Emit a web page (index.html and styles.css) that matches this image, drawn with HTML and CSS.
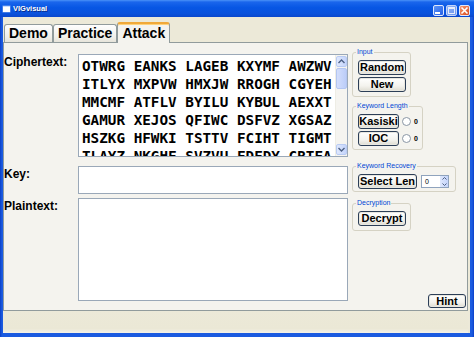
FILE: index.html
```html
<!DOCTYPE html>
<html lang="en">
<head>
  <meta charset="UTF-8">
  <title>VIGvisual</title>
  <link rel="stylesheet" href="styles.css">
</head>
<body>

<div class="window">
  <div class="titlebar">
    <span class="app-icon"></span>
    <span class="title">VIGvisual</span>
    <div class="controls">
      <span class="ctl ctl-min">
        <svg width="9" height="9" viewBox="0 0 9 9"><rect x="1" y="6" width="5" height="2" fill="#fff"/></svg>
      </span>
      <span class="ctl ctl-max">
        <svg width="9" height="9" viewBox="0 0 9 9"><rect x="1.5" y="1.5" width="6" height="6" fill="none" stroke="#e6ecfb" stroke-width="1"/><rect x="1" y="1" width="7" height="2" fill="#e6ecfb"/></svg>
      </span>
      <span class="ctl ctl-close">
        <svg width="9" height="9" viewBox="0 0 9 9"><path d="M1.5 1.5 L7.5 7.5 M7.5 1.5 L1.5 7.5" stroke="#fff" stroke-width="1.6"/></svg>
      </span>
    </div>
  </div>

  <div class="client">
    <div class="tabs">
      <div class="tab">Demo</div>
      <div class="tab">Practice</div>
      <div class="tab active">Attack</div>
    </div>

    <div class="panel">
      <div class="fields">
        <div class="row">
          <label class="field-label">Ciphertext:</label>
          <div class="textbox cipher">
            <div class="cipher-text">OTWRG EANKS LAGEB KXYMF AWZWV
ITLYX MXPVW HMXJW RROGH CGYEH
MMCMF ATFLV BYILU KYBUL AEXXT
GAMUR XEJOS QFIWC DSFVZ XGSAZ
HSZKG HFWKI TSTTV FCIHT TIGMT
TLAYZ NKGHF SVZVU FDEDY CRTEA
QHRAO LMKEB ZXNPU WTCJS VDIYG</div>
            <div class="vscroll">
              <div class="sb-btn">
                <svg width="7" height="5" viewBox="0 0 7 5"><path d="M0.5 4 L3.5 1 L6.5 4" fill="none" stroke="#4d6185" stroke-width="1.4"/></svg>
              </div>
              <div class="sb-thumb"></div>
              <div class="sb-track"></div>
              <div class="sb-btn">
                <svg width="7" height="5" viewBox="0 0 7 5"><path d="M0.5 1 L3.5 4 L6.5 1" fill="none" stroke="#4d6185" stroke-width="1.4"/></svg>
              </div>
            </div>
          </div>
        </div>

        <div class="row row-key">
          <label class="field-label">Key:</label>
          <div class="textbox key"></div>
        </div>

        <div class="row row-plain">
          <label class="field-label">Plaintext:</label>
          <div class="textbox plain"></div>
        </div>
      </div>

      <div class="side">
        <fieldset class="group">
          <legend>Input</legend>
          <div class="group-body">
            <button class="btn btn-wide">Random</button>
            <button class="btn btn-wide">New</button>
          </div>
        </fieldset>

        <fieldset class="group group-len">
          <legend>Keyword Length</legend>
          <div class="group-body">
            <div class="opt-row">
              <button class="btn btn-short">Kasiski</button>
              <span class="radio"></span>
              <span class="tiny">0</span>
            </div>
            <div class="opt-row">
              <button class="btn btn-short">IOC</button>
              <span class="radio"></span>
              <span class="tiny">0</span>
            </div>
          </div>
        </fieldset>

        <fieldset class="group group-rec">
          <legend>Keyword Recovery</legend>
          <div class="group-body">
            <div class="opt-row">
              <button class="btn btn-select">Select Len</button>
              <div class="spinner">
                <span class="spin-value">0</span>
                <div class="spin-btns">
                  <span class="spin-btn"><svg width="5" height="3" viewBox="0 0 5 3"><path d="M0.5 2.5 L2.5 0.5 L4.5 2.5" fill="none" stroke="#4d6185" stroke-width="1"/></svg></span>
                  <span class="spin-btn"><svg width="5" height="3" viewBox="0 0 5 3"><path d="M0.5 0.5 L2.5 2.5 L4.5 0.5" fill="none" stroke="#4d6185" stroke-width="1"/></svg></span>
                </div>
              </div>
            </div>
          </div>
        </fieldset>

        <fieldset class="group group-dec">
          <legend>Decryption</legend>
          <div class="group-body">
            <button class="btn btn-wide">Decrypt</button>
          </div>
        </fieldset>

        <button class="btn hint">Hint</button>
      </div>
    </div>

    <div class="statusbar"></div>
  </div>
</div>

</body>
</html>
```

FILE: styles.css
```css
body {
  margin: 0;
  font-family: "Liberation Sans", Arial, sans-serif;
  background: #ece9d8;
}

.window {
  width: 474px;
  height: 337px;
  display: flex;
  flex-direction: column;
  background: linear-gradient(90deg, #0a3fc8, #1b5be0 2px, #1b5be0 calc(100% - 2px), #0a3fc8);
}

/* title bar */
.titlebar {
  height: 17px;
  display: flex;
  align-items: center;
  padding: 0 4px 0 3px;
  background: linear-gradient(#4a92f8 0, #1a66ec 2px, #0756e4 45%, #0a52dc 80%, #0a47cc 100%);
  color: #fff;
}

.app-icon {
  width: 7px;
  height: 5px;
  background: #fff;
  border-top: 1px solid #c9dcff;
  box-shadow: 0 0 0 0.5px #7aa6f0;
}

.title {
  margin-left: 3px;
  font-size: 7.5px;
  font-weight: bold;
  text-shadow: 1px 1px 0 #0a2c8a;
}

.controls {
  margin-left: auto;
  display: flex;
  gap: 2px;
  align-self: flex-end;
  margin-bottom: 1px;
}

.ctl {
  width: 11px;
  height: 11px;
  box-sizing: border-box;
  border: 1px solid #dfe8fc;
  border-radius: 2px;
  display: flex;
  align-items: center;
  justify-content: center;
  background: linear-gradient(135deg, #5c94f8, #2560e6);
}

.ctl-max {
  background: linear-gradient(135deg, #8fb2f6, #6d96ee);
  border-color: #c2d4fa;
}

.ctl-close {
  background: linear-gradient(135deg, #f29a74, #d9491c);
}

/* client area */
.client {
  flex: 1;
  margin: 0 4px 4px 3px;
  padding-right: 2px;
  background: #ece9d8;
  display: flex;
  flex-direction: column;
}

.tabs {
  height: 26px;
  margin-bottom: -1px;
  padding-left: 1px;
  display: flex;
  align-items: flex-end;
  position: relative;
  z-index: 1;
}

.tab {
  height: 18px;
  margin-bottom: 1px;
  padding: 0 4px;
  box-sizing: border-box;
  border: 1px solid #919b9c;
  border-bottom: none;
  border-radius: 3px 3px 0 0;
  background: linear-gradient(#fefefe, #f0efea 70%, #e6e4da);
  font-size: 14px;
  font-weight: bold;
  line-height: 17px;
}

.tab.active {
  height: 21px;
  margin-bottom: 0;
  padding-top: 1px;
  background: #f4f3ee;
  border-top: 2px solid #f0a93a;
  box-shadow: inset 0 1px 0 #ffd27a;
  line-height: 17px;
}

.panel {
  flex: 1;
  display: flex;
  border: 1px solid #919b9c;
  background: #f4f3ee;
}

/* left column: labels + text fields */
.fields {
  padding-top: 11px;
  display: flex;
  flex-direction: column;
}

.row {
  display: flex;
}

.row-key {
  margin-top: 9px;
}

.row-plain {
  margin-top: 4px;
}

.field-label {
  width: 74px;
  font-size: 12px;
  font-weight: bold;
  line-height: 14px;
  padding-top: 1px;
}

.textbox {
  width: 270px;
  box-sizing: border-box;
  border: 1px solid #9aa8b8;
  background: #fff;
}

.cipher {
  height: 103px;
  display: flex;
}

.key {
  height: 28px;
}

.plain {
  height: 103px;
}

.cipher-text {
  flex: 1;
  overflow: hidden;
  padding: 2px 0 0 3px;
  white-space: pre;
  font-family: "DejaVu Sans Mono", monospace;
  font-size: 14.3px;
  font-weight: bold;
  line-height: 18px;
  color: #000;
}

.vscroll {
  width: 11px;
  display: flex;
  flex-direction: column;
  background: #f5f4f0;
  border-left: 1px solid #eeede5;
}

.sb-btn {
  height: 9px;
  margin: 1px 0;
  border: 1px solid #b9cbf3;
  border-radius: 2px;
  background: linear-gradient(90deg, #dfe8fd, #c4d4fb);
  display: flex;
  align-items: center;
  justify-content: center;
}

.sb-thumb {
  height: 19px;
  border: 1px solid #b4c6f1;
  border-radius: 2px;
  background: linear-gradient(90deg, #d3defc, #bccdf8);
}

.sb-track {
  flex: 1;
}

/* right column: option groups */
.side {
  flex: 1;
  padding: 5px 1px 0 4px;
  display: flex;
  flex-direction: column;
  align-items: flex-start;
}

.group {
  margin: 0;
  padding: 4px 4px 4px 5px;
  min-width: 0;
  border: 1px solid #d5d2c4;
  border-radius: 3px;
}

.group legend {
  margin-left: -2px;
  padding: 0 1px;
  font-size: 7px;
  line-height: 8px;
  color: #0046d5;
}

.group-len {
  margin-top: 5px;
  padding-bottom: 3px;
}

.group-rec {
  margin-top: 12px;
  padding-right: 6px;
  padding-bottom: 2px;
}

.group-dec {
  margin-top: 7px;
}

.group-body {
  display: flex;
  flex-direction: column;
  gap: 2px;
}

.opt-row {
  display: flex;
  align-items: center;
}

.btn {
  height: 15px;
  padding: 0;
  box-sizing: border-box;
  border: 1px solid #2c3e57;
  border-radius: 3px;
  background: linear-gradient(#ffffff, #f4f3ee 60%, #dedcd2);
  box-shadow: inset 0 0 0 1px #e8e7e0;
  font-family: "Liberation Sans", Arial, sans-serif;
  font-size: 11px;
  font-weight: bold;
  line-height: 13px;
  color: #000;
}

.btn-wide {
  width: 48px;
}

.btn-short {
  width: 41px;
}

.btn-select {
  width: 59px;
}

.radio {
  width: 7px;
  height: 7px;
  margin-left: 3px;
  border: 1px solid #8a96a4;
  border-radius: 50%;
  background: #fff;
}

.tiny {
  margin-left: 3px;
  font-size: 7px;
  font-weight: bold;
}

.spinner {
  width: 28px;
  height: 13px;
  margin-left: 4px;
  box-sizing: border-box;
  border: 1px solid #8fa3bd;
  background: #fff;
  display: flex;
}

.spin-value {
  flex: 1;
  padding-left: 3px;
  font-size: 7px;
  line-height: 11px;
}

.spin-btns {
  width: 8px;
  display: flex;
  flex-direction: column;
}

.spin-btn {
  flex: 1;
  background: linear-gradient(90deg, #dfe8fd, #c4d4fb);
  display: flex;
  align-items: center;
  justify-content: center;
}

.hint {
  width: 38px;
  height: 14px;
  margin-top: auto;
  margin-bottom: 2px;
  align-self: flex-end;
  line-height: 12px;
}

.statusbar {
  height: 22px;
  background: linear-gradient(#ece9d8, #ebe8d6 80%, #f4f2e8);
}
```
